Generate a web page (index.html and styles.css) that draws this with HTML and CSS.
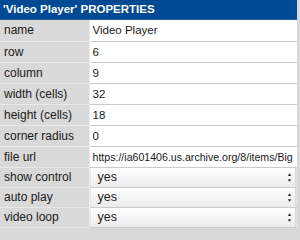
FILE: index.html
```html
<!DOCTYPE html>
<html lang="en">
<head>
    <meta charset="UTF-8">
    <meta name="viewport" content="width=device-width, initial-scale=1.0">
    <title>Properties</title>
    <link rel="stylesheet" href="styles.css">
</head>
<body>
    <div class="props-panel">
        <div class="props-header">'Video Player' PROPERTIES</div>
        <table class="props-table">
            <tr><td class="prop-name">name</td><td class="prop-value">Video Player</td></tr>
            <tr><td class="prop-name">row</td><td class="prop-value">6</td></tr>
            <tr><td class="prop-name">column</td><td class="prop-value">9</td></tr>
            <tr><td class="prop-name">width (cells)</td><td class="prop-value">32</td></tr>
            <tr><td class="prop-name">height (cells)</td><td class="prop-value">18</td></tr>
            <tr><td class="prop-name">corner radius</td><td class="prop-value">0</td></tr>
            <tr><td class="prop-name">file url</td><td class="prop-value url">https://ia601406.us.archive.org/8/items/Big</td></tr>
            <tr class="select-row"><td class="prop-name">show control</td><td class="prop-select"><div class="fake-select">yes<span class="arrows">&#9650;<br>&#9660;</span></div></td></tr>
            <tr class="select-row"><td class="prop-name">auto play</td><td class="prop-select"><div class="fake-select">yes<span class="arrows">&#9650;<br>&#9660;</span></div></td></tr>
            <tr class="select-row"><td class="prop-name">video loop</td><td class="prop-select"><div class="fake-select">yes<span class="arrows">&#9650;<br>&#9660;</span></div></td></tr>
        </table>
    </div>
</body>
</html>
```

FILE: styles.css
```css
* {
    margin: 0;
    padding: 0;
    box-sizing: border-box;
}

body {
    font-family: "Liberation Sans", Arial, sans-serif;
    background-color: #d9d9d9;
    width: 300px;
    height: 240px;
    overflow: hidden;
}

.props-panel {
    width: 297px;
    background-color: #d9d9d9;
}

.props-header {
    height: 20px;
    background-color: #004a94;
    border-bottom: 1px solid #2a5f9e;
    color: #ffffff;
    font-weight: bold;
    font-size: 11.5px;
    line-height: 19px;
    padding-left: 3px;
    white-space: nowrap;
}

.props-table {
    width: 100%;
    border-collapse: collapse;
    table-layout: fixed;
    font-size: 12px;
    color: #1a1a1a;
}

.props-table td {
    height: 21px;
    border-bottom: 1px solid #c9cccc;
    white-space: nowrap;
    overflow: hidden;
}

.prop-name {
    width: 89px;
    padding-left: 4px;
    background-color: #d9d9d9;
    border-right: 1px solid #ececec;
    border-bottom-color: #e8e8e8 !important;
}

.prop-value {
    padding-left: 3px;
    font-size: 11.5px;
    background-color: #ffffff;
}

.prop-value.url {
    font-size: 10.6px;
}

.select-row td {
    height: 20px;
}

.prop-select {
    padding: 0 1px 0 1px;
    background-color: #e6e6e6;
}

.fake-select {
    position: relative;
    height: 19px;
    line-height: 19px;
    padding-left: 7px;
    font-size: 12.5px;
    background: linear-gradient(#ffffff, #ebebeb);
    border-right: 1px solid #dcdcdc;
}

.arrows {
    position: absolute;
    right: 3px;
    top: 3px;
    font-size: 5px;
    line-height: 6px;
    color: #222;
    text-align: center;
}
```
